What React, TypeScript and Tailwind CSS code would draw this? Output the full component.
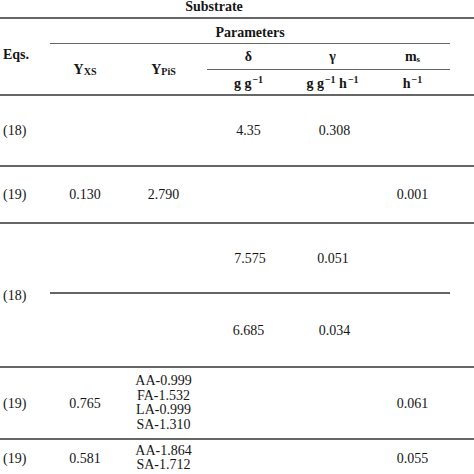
const cols = "grid grid-cols-[50px_70px_87px_83px_85px_75px_24px]";

function Sup({ children }: { children: React.ReactNode }) {
  return <sup className="text-[10px] -top-[5px] ml-[1px]">{children}</sup>;
}

function Stack({ items }: { items: string[] }) {
  return (
    <div className="flex flex-col items-center leading-[14.5px]">
      {items.map((t) => (
        <span key={t}>{t}</span>
      ))}
    </div>
  );
}

export default function App() {
  return (
    <div
      className="w-[474px] h-[474px] overflow-hidden bg-white text-[#151515] text-[14px]"
      style={{ fontFamily: '"Liberation Serif", "Times New Roman", serif' }}
    >
      {/* table caption row */}
      <div className="h-[17px] w-[428px] text-center font-bold leading-[13px]">Substrate</div>
      <div className="border-t-2 border-[#666]" />

      {/* header block */}
      <div className={`${cols} grid-rows-[25px_26px_24px] font-bold`}>
        <div className="row-span-3 col-start-1 flex items-center pl-[3px] pb-[4px]">Eqs.</div>
        <div className="col-start-2 col-span-5 border-b border-[#666] flex items-center justify-center pt-[2px]">
          Parameters
        </div>
        <div className="col-start-2 row-start-2 row-span-2 flex items-center justify-center">
          <span>
            Y<sub className="text-[10px] -bottom-[1px]">XS</sub>
          </span>
        </div>
        <div className="col-start-3 row-start-2 row-span-2 flex items-center justify-center">
          <span>
            Y<sub className="text-[10px] -bottom-[1px]">PiS</sub>
          </span>
        </div>
        <div className="col-start-4 row-start-2 border-b border-[#666] flex items-center justify-center">δ</div>
        <div className="col-start-5 row-start-2 border-b border-[#666] flex items-center justify-center">γ</div>
        <div className="col-start-6 row-start-2 border-b border-[#666] flex items-center justify-center">
          <span>
            m<sub className="text-[9px] -bottom-[1px]">s</sub>
          </span>
        </div>
        <div className="col-start-4 row-start-3 flex items-center justify-center pt-[2px]">
          <span>
            g g<Sup>−1</Sup>
          </span>
        </div>
        <div className="col-start-5 row-start-3 flex items-center justify-center pt-[2px]">
          <span>
            g g<Sup>−1</Sup> h<Sup>−1</Sup>
          </span>
        </div>
        <div className="col-start-6 row-start-3 flex items-center justify-center pt-[2px]">
          <span>
            h<Sup>−1</Sup>
          </span>
        </div>
      </div>
      <div className="border-t-2 border-[#666]" />

      {/* body */}
      <div className={`${cols} h-[69px] items-center`}>
        <div className="pl-[3px]">(18)</div>
        <div />
        <div />
        <div className="text-center">4.35</div>
        <div className="text-center pl-[4px]">0.308</div>
      </div>
      <div className="border-t-2 border-[#666]" />

      <div className={`${cols} h-[55px] items-center`}>
        <div className="pl-[3px]">(19)</div>
        <div className="text-center">0.130</div>
        <div className="text-center">2.790</div>
        <div />
        <div />
        <div className="text-center">0.001</div>
      </div>
      <div className="border-t-2 border-[#666]" />

      <div className={`${cols} grid-rows-[70px_72px]`}>
        <div className="row-span-2 flex items-center pl-[3px] pt-[1px]">(18)</div>
        <div className="col-start-2 col-span-5 border-b-2 border-[#666] grid grid-cols-[70px_87px_83px_85px_75px] items-center">
          <div />
          <div />
          <div className="text-center pl-[3px]">7.575</div>
          <div className="text-center pl-[1px]">0.051</div>
        </div>
        <div className="col-start-2 col-span-5 grid grid-cols-[70px_87px_83px_85px_75px] items-center">
          <div />
          <div />
          <div className="text-center">6.685</div>
          <div className="text-center pl-[4px]">0.034</div>
        </div>
      </div>
      <div className="border-t-2 border-[#666]" />

      <div className={`${cols} h-[70px] items-center`}>
        <div className="pl-[3px]">(19)</div>
        <div className="text-center">0.765</div>
        <Stack items={["AA-0.999", "FA-1.532", "LA-0.999", "SA-1.310"]} />
        <div />
        <div />
        <div className="text-center">0.061</div>
      </div>
      <div className="border-t-2 border-[#666]" />

      <div className={`${cols} h-[36px] items-center`}>
        <div className="pl-[3px]">(19)</div>
        <div className="text-center">0.581</div>
        <Stack items={["AA-1.864", "SA-1.712"]} />
        <div />
        <div />
        <div className="text-center">0.055</div>
      </div>
    </div>
  );
}
